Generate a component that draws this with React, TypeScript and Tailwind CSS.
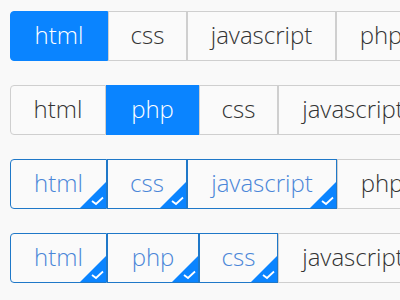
import React from "react";

type Item = { label: string; w: number; on?: boolean };

const rows: { mode: "solid" | "check"; items: Item[] }[] = [
  {
    mode: "solid",
    items: [
      { label: "html", w: 98, on: true },
      { label: "css", w: 79 },
      { label: "javascript", w: 149 },
      { label: "php", w: 90 },
    ],
  },
  {
    mode: "solid",
    items: [
      { label: "html", w: 96 },
      { label: "php", w: 93, on: true },
      { label: "css", w: 79 },
      { label: "javascript", w: 150 },
    ],
  },
  {
    mode: "check",
    items: [
      { label: "html", w: 97, on: true },
      { label: "css", w: 80, on: true },
      { label: "javascript", w: 150, on: true },
      { label: "php", w: 90 },
    ],
  },
  {
    mode: "check",
    items: [
      { label: "html", w: 97, on: true },
      { label: "php", w: 92, on: true },
      { label: "css", w: 79, on: true },
      { label: "javascript", w: 150 },
    ],
  },
];

function Corner() {
  return (
    <svg className="absolute right-0 bottom-0" width="26" height="26" viewBox="0 0 26 26">
      <polygon points="26,0 26,26 0,26" fill="#0a84ff" />
      <path d="M12 19 L16 22 L23 15.5" stroke="#fff" strokeWidth="1.8" fill="none" />
    </svg>
  );
}

export default function App() {
  return (
    <div
      className="w-[400px] h-[300px] overflow-hidden bg-[#f9f9f9] pt-[11px] pl-[10px] flex flex-col gap-[24px]"
      style={{ fontFamily: '"Open Sans", "Noto Sans", sans-serif' }}
    >
      {rows.map((row, ri) => (
        <div key={ri} className="flex h-[50px] shrink-0">
          {row.items.map((it, i) => {
            const first = i === 0;
            let cls =
              "relative shrink-0 flex items-center justify-center text-[24px] border h-[50px] ";
            if (row.mode === "solid") {
              cls += it.on
                ? "bg-[#0a84ff] border-[#0a84ff] text-white "
                : "bg-[#fafafa] border-[#cfcfcf] text-[#333] ";
            } else {
              cls += it.on
                ? "bg-[#fafafa] border-[#1f78c8] text-[#4a86d8] "
                : "bg-[#fafafa] border-[#cfcfcf] text-[#333] ";
            }
            if (first) cls += "rounded-l-[4px] ";
            return (
              <div key={i} className={cls} style={{ width: it.w }}>
                <span className="leading-none pb-[3px] font-light">{it.label}</span>
                {row.mode === "check" && it.on && <Corner />}
              </div>
            );
          })}
        </div>
      ))}
    </div>
  );
}
